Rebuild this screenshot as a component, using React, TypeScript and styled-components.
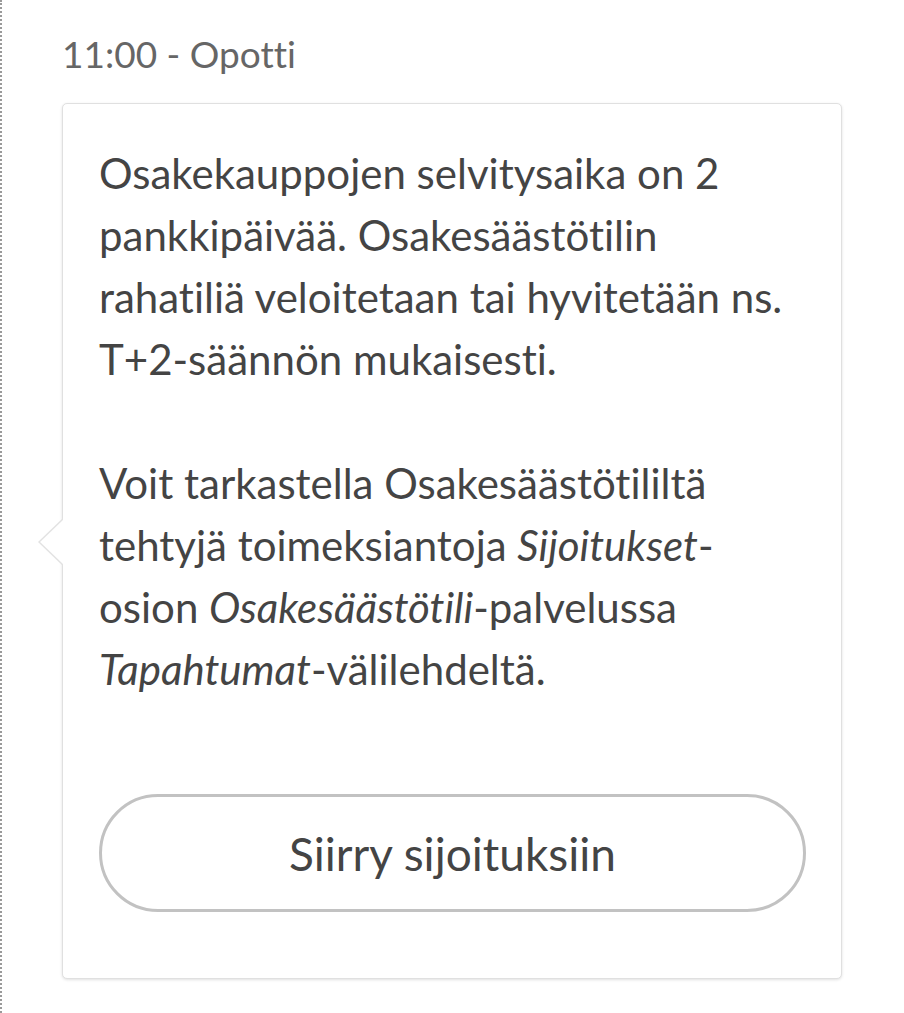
import React from 'react'
import styled, { createGlobalStyle } from 'styled-components'

const Global = createGlobalStyle`
  html, body { margin: 0; padding: 0; background: #fff; }
  body {
    font-family: Lato, 'Liberation Sans', sans-serif;
    font-variant-ligatures: none;
  }
`

const Page = styled.div`
  min-height: 1013px;
  border-left: 2px dotted #9a9a9a;
  box-sizing: border-box;
  padding: 33px 62px 33px 60px;
`

const Meta = styled.div`
  font-size: 37px;
  line-height: 42px;
  color: #666;
  margin-bottom: 28px;
`

const Bubble = styled.div`
  position: relative;
  width: 780px;
  box-sizing: border-box;
  background: #fff;
  border: 1px solid #e0e0e0;
  border-radius: 5px;
  box-shadow: 0 1px 3px rgba(0, 0, 0, 0.12);
  padding: 38px 36px 66px 36px;

  &::before {
    content: '';
    position: absolute;
    left: -25px;
    top: 414px;
    width: 0;
    height: 0;
    border-top: 24px solid transparent;
    border-bottom: 24px solid transparent;
    border-right: 25px solid #e2e2e2;
  }
  &::after {
    content: '';
    position: absolute;
    left: -23px;
    top: 415px;
    width: 0;
    height: 0;
    border-top: 23px solid transparent;
    border-bottom: 23px solid transparent;
    border-right: 24px solid #fff;
  }
`

const Para = styled.p`
  margin: 0 0 62px 0;
  font-size: 42px;
  line-height: 62px;
  color: #444;
  em { font-style: italic; }
`

const Button = styled.button`
  display: block;
  width: 707px;
  height: 118px;
  margin-top: 94px;
  background: #fff;
  border: 3px solid #c2c2c2;
  border-radius: 59px;
  font-family: inherit;
  font-variant-ligatures: none;
  font-size: 46px;
  color: #444;
  cursor: pointer;
`

export default function App() {
  return (
    <>
      <Global />
      <Page>
        <Meta>11:00 - Opotti</Meta>
        <Bubble>
          <Para>
            Osakekauppojen selvitysaika on 2<br />
            pankkipäivää. Osakesäästötilin<br />
            rahatiliä veloitetaan tai hyvitetään ns.<br />
            T+2-säännön mukaisesti.
          </Para>
          <Para>
            Voit tarkastella Osakesäästötililtä<br />
            tehtyjä toimeksiantoja <em>Sijoitukset</em>-<br />
            osion <em>Osakesäästötili</em>-palvelussa<br />
            <em>Tapahtumat</em>-välilehdeltä.
          </Para>
          <Button>Siirry sijoituksiin</Button>
        </Bubble>
      </Page>
    </>
  )
}
